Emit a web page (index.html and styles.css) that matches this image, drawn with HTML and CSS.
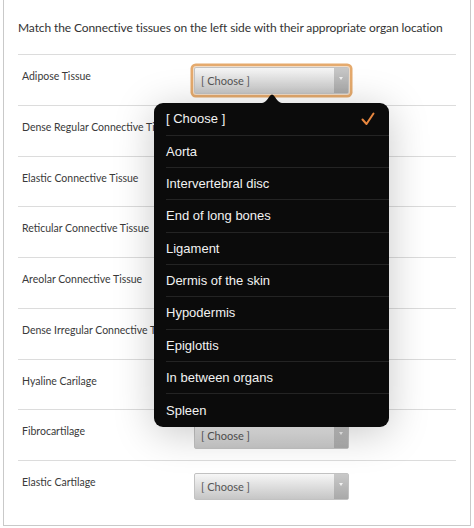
FILE: index.html
```html
<!DOCTYPE html>
<html>
<head>
<meta charset="utf-8">
<link rel="stylesheet" href="styles.css">
</head>
<body>
<div class="card">
  <div class="title">Match the Connective tissues on the left side with their appropriate organ location</div>
  <div class="row"><div class="label">Adipose Tissue</div><div class="select focused"><span>[ Choose ]</span><i class="arrow"></i></div></div>
  <div class="row"><div class="label">Dense Regular Connective Tissue</div><div class="select"><span>[ Choose ]</span><i class="arrow"></i></div></div>
  <div class="row"><div class="label">Elastic Connective Tissue</div><div class="select"><span>[ Choose ]</span><i class="arrow"></i></div></div>
  <div class="row"><div class="label">Reticular Connective Tissue</div><div class="select"><span>[ Choose ]</span><i class="arrow"></i></div></div>
  <div class="row"><div class="label">Areolar Connective Tissue</div><div class="select"><span>[ Choose ]</span><i class="arrow"></i></div></div>
  <div class="row"><div class="label">Dense Irregular Connective Tissue</div><div class="select"><span>[ Choose ]</span><i class="arrow"></i></div></div>
  <div class="row"><div class="label">Hyaline Carilage</div><div class="select"><span>[ Choose ]</span><i class="arrow"></i></div></div>
  <div class="row"><div class="label">Fibrocartilage</div><div class="select"><span>[ Choose ]</span><i class="arrow"></i></div></div>
  <div class="row"><div class="label">Elastic Cartilage</div><div class="select"><span>[ Choose ]</span><i class="arrow"></i></div></div>
</div>

<div class="popover">
  <svg class="pointer" width="34" height="11" viewBox="0 0 34 11"><path d="M0 11 C8 11 11 9 14 4 Q17 -1 20 4 C23 9 26 11 34 11 Z" fill="#0b0b0b"/></svg>
  <ul class="menu">
    <li class="item"><span>[ Choose ]</span><svg class="check" width="14" height="14" viewBox="0 0 14 14"><polyline points="1.5,7.5 5.5,12 12.5,1.5" fill="none" stroke="#e8873f" stroke-width="2" stroke-linecap="round" stroke-linejoin="round"/></svg></li>
    <li class="item"><span>Aorta</span></li>
    <li class="item"><span>Intervertebral disc</span></li>
    <li class="item"><span>End of long bones</span></li>
    <li class="item"><span>Ligament</span></li>
    <li class="item"><span>Dermis of the skin</span></li>
    <li class="item"><span>Hypodermis</span></li>
    <li class="item"><span>Epiglottis</span></li>
    <li class="item"><span>In between organs</span></li>
    <li class="item last"><span>Spleen</span></li>
  </ul>
</div>
</body>
</html>
```
FILE: styles.css
```css
html, body {
  margin: 0;
  padding: 0;
  background: #ffffff;
}
body {
  font-family: Lato, "Open Sans", sans-serif;
  color: #333333;
  width: 474px;
  height: 528px;
  overflow: hidden;
  position: relative;
}
.card {
  box-sizing: border-box;
  margin-left: 3px;
  width: 468px;
  height: 526px;
  border: 1px solid #c9c9c9;
  border-top: none;
  padding: 0 14px;
}
.title {
  box-sizing: border-box;
  height: 54px;
  padding-top: 20px;
  font-size: 12px;
  letter-spacing: -0.1px;
  line-height: 16px;
  color: #333;
  white-space: nowrap;
}
.row {
  box-sizing: border-box;
  height: 50.75px;
  border-top: 1px solid #dcdcdc;
  display: grid;
  grid-template-columns: 176px 155px;
  align-items: start;
}
.label {
  padding-left: 4px;
  padding-top: 14px;
  font-size: 10.5px;
  line-height: 14px;
  color: #3a3a3a;
  white-space: nowrap;
}
.select {
  box-sizing: border-box;
  margin-top: 12px;
  height: 27px;
  border: 1px solid #c2c2c2;
  border-radius: 2px;
  background: linear-gradient(#f6f6f6, #c6c6c6);
  display: flex;
  align-items: center;
  position: relative;
}
.select span {
  padding-left: 6px;
  font-size: 11px;
  color: #555;
  flex: 1;
}
.select .arrow {
  width: 14px;
  align-self: stretch;
  background: linear-gradient(#c8c8c8, #a9a9a9);
  position: relative;
}
.select .arrow::after {
  content: "";
  position: absolute;
  left: 5px;
  top: 9px;
  border-left: 2.5px solid transparent;
  border-right: 2.5px solid transparent;
  border-top: 3px solid #f2f2f2;
}
.select.focused {
  box-shadow: 0 0 0 1px #f2dcc6, 0 0 0 3.5px #e5aa6d;
}
.popover {
  position: absolute;
  left: 154px;
  top: 103.3px;
  width: 235px;
  height: 323.4px;
  background: #0b0b0b;
  border-radius: 9px;
  box-shadow: 0 6px 40px rgba(0,0,0,0.22);
}
.pointer {
  position: absolute;
  left: 101px;
  top: -10px;
  display: block;
}
.menu {
  list-style: none;
  margin: 0;
  padding: 0;
}
.item {
  box-sizing: border-box;
  height: 32.34px;
  margin-left: 12px;
  padding-right: 14px;
  border-bottom: 1px solid #242424;
  display: flex;
  align-items: center;
  justify-content: space-between;
  font-family: "Liberation Sans", Arial, sans-serif;
  font-size: 13px;
  color: #f2f2f2;
}
.item.last {
  border-bottom: none;
}
.check {
  display: block;
}
```
